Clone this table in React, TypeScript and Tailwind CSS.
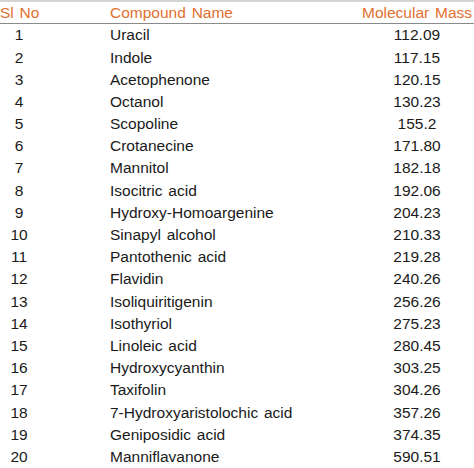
import React from "react"

const rows: [string, string, string][] = [
  ["1", "Uracil", "112.09"],
  ["2", "Indole", "117.15"],
  ["3", "Acetophenone", "120.15"],
  ["4", "Octanol", "130.23"],
  ["5", "Scopoline", "155.2"],
  ["6", "Crotanecine", "171.80"],
  ["7", "Mannitol", "182.18"],
  ["8", "Isocitric acid", "192.06"],
  ["9", "Hydroxy-Homoargenine", "204.23"],
  ["10", "Sinapyl alcohol", "210.33"],
  ["11", "Pantothenic acid", "219.28"],
  ["12", "Flavidin", "240.26"],
  ["13", "Isoliquiritigenin", "256.26"],
  ["14", "Isothyriol", "275.23"],
  ["15", "Linoleic acid", "280.45"],
  ["16", "Hydroxycyanthin", "303.25"],
  ["17", "Taxifolin", "304.26"],
  ["18", "7-Hydroxyaristolochic acid", "357.26"],
  ["19", "Geniposidic acid", "374.35"],
  ["20", "Manniflavanone", "590.51"],
]

const App: React.FC = () => {
  return (
    <div className="w-[474px] h-[468px] overflow-hidden bg-white font-['Liberation_Sans',Arial,sans-serif] text-[15.5px] leading-none [word-spacing:1.5px]">
      <div className="grid grid-cols-[38px_1fr_114px] h-[24px] items-center border-t-2 border-t-[#d4d4d4] border-b border-b-[#8a8a8a] text-[#e2702f]">
        <div className="text-center whitespace-nowrap pt-[1px]">Sl No</div>
        <div className="pl-[72px] pt-[1px]">Compound Name</div>
        <div className="text-center whitespace-nowrap pt-[1px]">Molecular Mass</div>
      </div>
      {rows.map(([no, name, mass]) => (
        <div key={no} className="grid grid-cols-[38px_1fr_114px] h-[22.2px] items-center text-[#1a1a1a]">
          <div className="text-center">{no}</div>
          <div className="pl-[72px] whitespace-nowrap">{name}</div>
          <div className="text-center">{mass}</div>
        </div>
      ))}
    </div>
  )
}

export default App
